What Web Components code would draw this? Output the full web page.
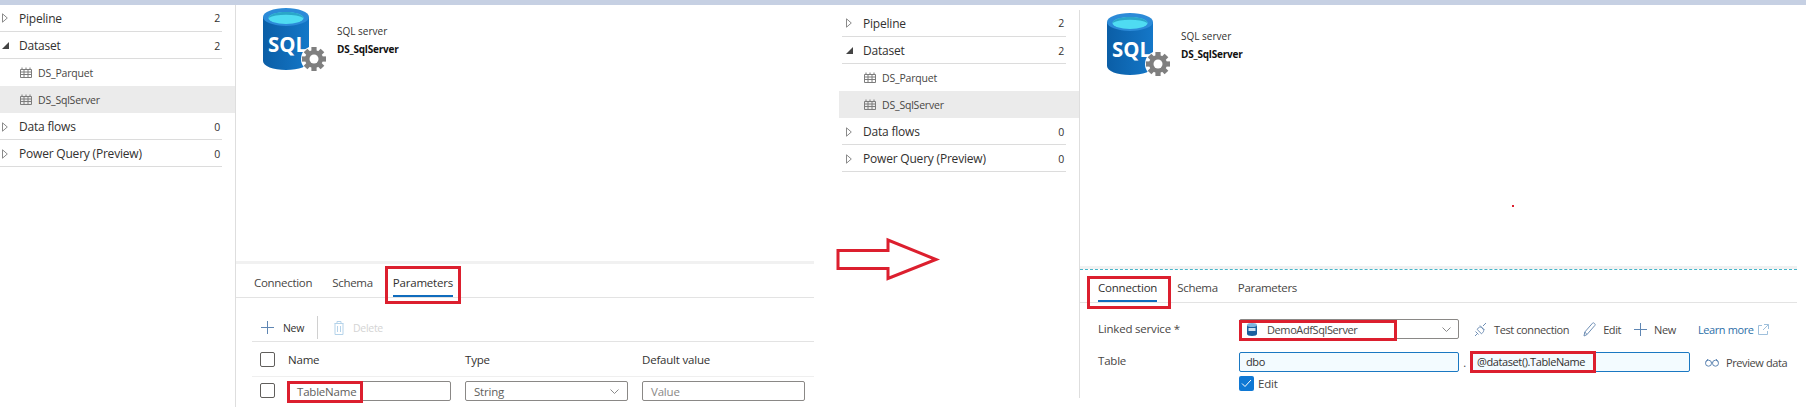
<!DOCTYPE html>
<html>
<head>
<meta charset="utf-8">
<title>Dataset parameters</title>
<style>
    html, body { margin: 0; height: 100%; overflow: hidden; background: #fff; }
    body { font-family: "Open Sans", "Noto Sans", sans-serif; color: #323130; }
</style>
</head>
<body>
<adf-screen>
    <adf-pane style="--pane-width: 820px; --pane-height: 402px; --main-width: 579px">
        <adf-tree></adf-tree>
        <adf-tabs active="Parameters">
            <adf-parameters></adf-parameters>
        </adf-tabs>
    </adf-pane>
    <adf-pane style="--pane-width: 958px; --pane-height: 388px; --main-width: 718px; margin-left: 24px; margin-top: 5px">
        <adf-tree></adf-tree>
        <adf-tabs active="Connection" dashed>
            <adf-connection></adf-connection>
        </adf-tabs>
    </adf-pane>

    <!-- annotations drawn over the screenshot -->
    <red-box slot="notes" x="385" y="266" w="76" h="38"></red-box>
    <red-box slot="notes" x="287" y="381" w="76" h="22"></red-box>
    <red-box slot="notes" x="1087" y="276" w="84" h="33"></red-box>
    <red-box slot="notes" x="1239" y="320" w="158" h="21"></red-box>
    <red-box slot="notes" x="1470" y="351" w="126" h="22"></red-box>
    <red-arrow slot="notes"></red-arrow>
</adf-screen>

<script>
const ICONS = {
    plus: `<svg width="13" height="13" viewBox="0 0 13 13"><path d="M6.5 0v13M0 6.5h13" stroke="#5f86b3" fill="none"/></svg>`,
    trash: `<svg width="10" height="14" viewBox="0 0 10 14" fill="none" stroke="#b5d3ea"><path d="M.5 2.5h9M3 2.5V.5h4v2M1 2.5v11h8v-11M3.5 5v6M6.5 5v6"/></svg>`,
    chevron: `<svg width="9" height="5" viewBox="0 0 9 5"><path d="M.5.5l4 4 4-4" stroke="#8a8a8a" fill="none"/></svg>`,
    plug: `<svg width="13" height="15" viewBox="0 0 13 15" fill="none" stroke="#6f8fb5"><path d="M1 14l3-3M12 1L9 4M3.2 7.5l4.3 4.3 1.5-1.6c1-1 .9-2.300 0-3.200L7.700 5.700c-.9-.9-2.200-1-3.200 0zM6 3.500L10.500 8M1.500 9.500l3 3"/></svg>`,
    pencil: `<svg width="13" height="15" viewBox="0 0 13 15" fill="none" stroke="#6f8fb5"><path d="M1 14l.8-4L9.500 1.200c.5-.5 1.200-.5 1.700 0l.6.600c.5.500.5 1.200 0 1.700L4 12.500zM1.800 10L4 12.500"/></svg>`,
    external: `<svg width="11" height="11" viewBox="0 0 11 11" fill="none" stroke="#9fc0dc"><path d="M4 1.500H.5v9h9V7M6 .500h4.500V5M10.500 .500L5 6"/></svg>`,
    glasses: `<svg width="14" height="9" viewBox="0 0 14 9" fill="none" stroke="#5f86b3"><circle cx="3.500" cy="5.200" r="3"/><circle cx="10.500" cy="5.200" r="3"/><path d="M6.500 4.500c.5-.5 .5-.5 1 0M1 3.500L3 1M13 3.500L11 1"/></svg>`,
    db: `<svg width="10" height="13" viewBox="0 0 10 13"><path d="M0 2v9c0 1 2 2 5 2s5-1 5-2V2z" fill="#1b5f9e"/><ellipse cx="5" cy="2" rx="5" ry="2" fill="#7fb6e0"/><rect x="1.500" y="5" width="7" height="3" fill="#cfe3f3"/></svg>`,
    grid: `<svg width="12" height="11" viewBox="0 0 12 11" fill="none" stroke="#7d7d7d"><path d="M.5 2.500h11v8H.5zM.5 5h11M.5 7.500h11M4 2.500v8M8 2.500v8M2 .500v2M6 .500v2M10 .500v2"/></svg>`
};

class AdfScreen extends HTMLElement {
    constructor() {
        super();
        this.attachShadow({ mode: "open" });
    }

    connectedCallback() {
        this.shadowRoot.innerHTML = `
            <style>
                :host { display: block; position: relative; height: 407px; overflow: hidden; }
                .topbar { height: 5px; background: #c6d0e3; }
                .panes { display: flex; align-items: flex-start; margin-left: -5px; }
            </style>
            <div class="topbar"></div>
            <div class="panes"><slot></slot></div>
            <slot name="notes"></slot>
        `;
    }
}

class AdfPane extends HTMLElement {
    constructor() {
        super();
        this.attachShadow({ mode: "open" });
    }

    connectedCallback() {
        this.shadowRoot.innerHTML = `
            <style>
                :host {
                    display: flex;
                    flex: none;
                    width: var(--pane-width);
                    height: var(--pane-height);
                }
                .side { flex: none; width: 240px; }
                .main {
                    flex: none;
                    width: var(--main-width);
                    box-sizing: border-box;
                    border-left: 1px solid #dedede;
                    display: flex;
                    flex-direction: column;
                }
                .head {
                    flex: none;
                    height: 256px;
                    box-sizing: border-box;
                    padding: 3px 0 0 27px;
                    display: flex;
                }
                .titles { margin: 14px 0 0 10px; font-size: 10px; line-height: 18px; }
                .titles b { display: block; font-weight: 700; color: #111; font-size: 10px; letter-spacing: -.2px; }
                text { font-family: "Open Sans", sans-serif; font-weight: 700; }
            </style>
            <div class="side"><slot name="tree"></slot></div>
            <div class="main">
                <div class="head">
                    <svg width="64" height="64" viewBox="0 0 64 64">
                        <defs>
                            <linearGradient id="can" x1="0" x2="1" y1="0" y2="0">
                                <stop offset="0" stop-color="#0b5ea6"/>
                                <stop offset="1" stop-color="#1477c8"/>
                            </linearGradient>
                        </defs>
                        <path d="M0 9v44c0 5 10 9 23 9s23-4 23-9V9z" fill="url(#can)"/>
                        <ellipse cx="23" cy="9" rx="23" ry="9" fill="#2c8bd8"/>
                        <ellipse cx="23" cy="10" rx="17.500" ry="6" fill="#4fdcf2"/>
                        <path d="M5.500 10c0-3.300 7.800-6 17.500-6s17.500 2.700 17.500 6c-4-2.400-10-3.300-17.500-3.300S9.500 7.600 5.500 10z" fill="#2aa7c9"/>
                        <text x="5" y="44" font-size="22" fill="#fff" textLength="39" lengthAdjust="spacingAndGlyphs">SQL</text>
                        <g transform="translate(51 51)">
                            <circle r="13" fill="#fff"/>
                            <g fill="#7f7f7f">
                                <circle r="9"/>
                                <rect x="-2.600" y="-12" width="5.200" height="24"/>
                                <rect x="-2.600" y="-12" width="5.200" height="24" transform="rotate(45)"/>
                                <rect x="-2.600" y="-12" width="5.200" height="24" transform="rotate(90)"/>
                                <rect x="-2.600" y="-12" width="5.200" height="24" transform="rotate(135)"/>
                            </g>
                            <circle r="4.500" fill="#fff"/>
                        </g>
                    </svg>
                    <div class="titles">SQL server<b>DS_SqlServer</b></div>
                </div>
                <slot></slot>
            </div>
        `;
        const tree = this.querySelector("adf-tree");
        if (tree) tree.slot = "tree";
    }
}

class AdfTree extends HTMLElement {
    constructor() {
        super();
        this.attachShadow({ mode: "open" });
    }

    row(label, count, open) {
        const arrow = open
            ? `<svg width="7" height="7" viewBox="0 0 7 7"><path d="M0 7L7 0v7z" fill="#444"/></svg>`
            : `<svg width="6" height="10" viewBox="0 0 6 10"><path d="M.5 .8v8.400L5.300 5z" fill="none" stroke="#8a8a8a"/></svg>`;
        return `<div class="row"><span class="arrow">${arrow}</span><span class="label">${label}</span><span class="count">${count}</span></div>`;
    }

    leaf(label, selected) {
        return `<div class="leaf ${selected ? "selected" : ""}">${ICONS.grid}<span>${label}</span></div>`;
    }

    connectedCallback() {
        this.shadowRoot.innerHTML = `
            <style>
                :host { display: block; }
                .row {
                    height: 27px;
                    box-sizing: border-box;
                    margin: 0 13px 0 3px;
                    border-bottom: 1px solid #dcdcdc;
                    display: flex;
                    align-items: center;
                    font-size: 12px;
                    letter-spacing: -.2px;
                    color: #323130;
                }
                .row:nth-child(n+3) { padding-top: 1px; }
                .arrow { width: 21px; padding-left: 4px; box-sizing: border-box; display: flex; }
                .label { flex: 1; }
                .count { font-size: 10.500px; margin-right: 2px; }
                .leaf {
                    height: 27px;
                    display: flex;
                    align-items: center;
                    padding-left: 25px;
                    font-size: 10.500px;
                    letter-spacing: -.2px;
                    color: #484644;
                }
                .leaf svg { margin-right: 6px; }
                .leaf.selected { background: #ebebeb; }
            </style>
            ${this.row("Pipeline", 2)}
            ${this.row("Dataset", 2, true)}
            ${this.leaf("DS_Parquet")}
            ${this.leaf("DS_SqlServer", true)}
            ${this.row("Data flows", 0)}
            ${this.row("Power Query (Preview)", 0)}
        `;
    }
}

class AdfTabs extends HTMLElement {
    constructor() {
        super();
        this.attachShadow({ mode: "open" });
    }

    connectedCallback() {
        const active = this.getAttribute("active");
        const tabs = ["Connection", "Schema", "Parameters"]
            .map((name) => `<span class="tab ${name === active ? "active" : ""}">${name}</span>`)
            .join("");
        this.shadowRoot.innerHTML = `
            <style>
                :host { display: block; flex: 1; min-height: 0; }
                .bar { height: 3px; background: #f1f1f1; }
                .strip {
                    height: 34px;
                    box-sizing: border-box;
                    padding-left: 18px;
                    border-bottom: 1px solid #e3e3e3;
                    display: flex;
                    gap: 20px;
                    font-size: 11.500px;
                    letter-spacing: -.3px;
                }
                :host([dashed]) .strip { border-top: 1px dashed #45b5c9; }
                .tab { height: 33px; box-sizing: border-box; padding-top: 11px; line-height: 16px; color: #484644; }
                :host([dashed]) .tab { height: 32px; padding-top: 10px; }
                .active { color: #323130; border-bottom: 2px solid #0f6cbd; font-weight: 500; letter-spacing: -.2px; }
            </style>
            <div class="bar"></div>
            <div class="strip">${tabs}</div>
            <slot></slot>
        `;
    }
}

class AdfParameters extends HTMLElement {
    constructor() {
        super();
        this.attachShadow({ mode: "open" });
    }

    connectedCallback() {
        this.shadowRoot.innerHTML = `
            <style>
                :host { display: block; padding-left: 16px; font-size: 11.500px; letter-spacing: -.2px; overflow: hidden; }
                .toolbar {
                    height: 44px;
                    box-sizing: border-box;
                    padding: 16px 0 0 9px;
                    border-bottom: 1px solid #e3e3e3;
                    display: flex;
                    align-items: center;
                    font-size: 10.500px;
                    letter-spacing: -.3px;
                }
                .toolbar .text { margin-left: 9px; }
                .divider { width: 1px; height: 23px; background: #d0d0d0; margin: 0 16px 0 13px; }
                .disabled { color: #d4d4d4; margin-left: 9px; }
                .row {
                    display: grid;
                    grid-template-columns: 28px 177px 177px 163px;
                    padding-left: 8px;
                    align-items: center;
                }
                .header { height: 35px; border-bottom: 1px solid #efefef; box-sizing: border-box; }
                .body { height: 30px; padding-top: 4px; box-sizing: border-box; align-items: start; }
                .box { width: 15px; height: 15px; box-sizing: border-box; border: 1px solid #605e5c; border-radius: 2px; }
                .body .box { margin-top: 2px; }
                .field {
                    width: 163px;
                    height: 20px;
                    box-sizing: border-box;
                    border: 1px solid #8a8886;
                    border-radius: 2px;
                    padding: 0 8px;
                    display: flex;
                    align-items: center;
                    justify-content: space-between;
                    color: #605e5c;
                }
                .field.placeholder { color: #8a8886; }
            </style>
            <div class="toolbar">
                ${ICONS.plus}<span class="text">New</span>
                <span class="divider"></span>
                ${ICONS.trash}<span class="disabled">Delete</span>
            </div>
            <div class="row header">
                <span class="box"></span><span>Name</span><span>Type</span><span>Default value</span>
            </div>
            <div class="row body">
                <span class="box"></span>
                <span class="field">TableName</span>
                <span class="field">String ${ICONS.chevron}</span>
                <span class="field placeholder">Value</span>
            </div>
        `;
    }
}

class AdfConnection extends HTMLElement {
    constructor() {
        super();
        this.attachShadow({ mode: "open" });
    }

    connectedCallback() {
        this.shadowRoot.innerHTML = `
            <style>
                :host {
                    display: grid;
                    grid-template-columns: 141px 1fr;
                    padding: 16px 0 0 18px;
                    font-size: 11.500px;
                    letter-spacing: -.2px;
                    color: #484644;
                }
                .label { line-height: 20px; }
                .label.second { line-height: 17px; }
                .line { display: flex; align-items: center; height: 20px; font-size: 11px; letter-spacing: -.4px; }
                .second { margin-top: 13px; }
                .select {
                    width: 220px;
                    height: 20px;
                    box-sizing: border-box;
                    border: 1px solid #8a8886;
                    border-radius: 2px;
                    padding: 0 7px;
                    display: flex;
                    align-items: center;
                }
                .select svg:first-child { margin-right: 10px; }
                .select svg:last-child { margin-left: auto; }
                .input {
                    width: 220px;
                    height: 20px;
                    box-sizing: border-box;
                    border: 1px solid #1a78c2;
                    border-radius: 2px;
                    background: #f3fbff;
                    padding: 0 6px;
                    line-height: 18px;
                    color: #323130;
                }
                .dot { width: 11px; text-align: center; }
                .action { display: inline-flex; align-items: center; gap: 7px; }
                .link { color: #2d6fa8; gap: 4px; }
                .edit { display: flex; align-items: center; gap: 4px; margin-top: 4px; height: 15px; }
                .check {
                    width: 15px;
                    height: 15px;
                    border-radius: 2px;
                    background: #0f78d4;
                    display: flex;
                    align-items: center;
                    justify-content: center;
                }
            </style>
            <div class="label">Linked service *</div>
            <div class="line">
                <div class="select">${ICONS.db}<span>DemoAdfSqlServer</span>${ICONS.chevron}</div>
                <span class="action" style="margin-left:15px">${ICONS.plug}Test connection</span>
                <span class="action" style="margin-left:14px">${ICONS.pencil}Edit</span>
                <span class="action" style="margin-left:13px">${ICONS.plus}New</span>
                <span class="action link" style="margin-left:22px">Learn more ${ICONS.external}</span>
            </div>
            <div class="label second">Table</div>
            <div class="second">
                <div class="line">
                    <div class="input">dbo</div>
                    <span class="dot">.</span>
                    <div class="input">@dataset().TableName</div>
                    <span class="action" style="margin-left:15px">${ICONS.glasses}Preview data</span>
                </div>
                <div class="edit">
                    <span class="check"><svg width="11" height="9" viewBox="0 0 11 9"><path d="M1 4.500l3 3 6-6.500" stroke="#fff" fill="none"/></svg></span>
                    Edit
                </div>
            </div>
        `;
    }
}

class RedBox extends HTMLElement {
    constructor() {
        super();
        this.attachShadow({ mode: "open" });
    }

    connectedCallback() {
        const [x, y, w, h] = ["x", "y", "w", "h"].map((name) => this.getAttribute(name));
        this.shadowRoot.innerHTML = `
            <style>
                :host {
                    position: absolute;
                    left: ${x}px; top: ${y}px; width: ${w}px; height: ${h}px;
                    box-sizing: border-box;
                    border: 3px solid #dc1f2e;
                }
            </style>
        `;
    }
}

class RedArrow extends HTMLElement {
    constructor() {
        super();
        this.attachShadow({ mode: "open" });
    }

    connectedCallback() {
        this.shadowRoot.innerHTML = `
            <style>
                :host { position: absolute; left: 0; top: 0; }
                svg { position: absolute; left: 830px; top: 200px; }
                i { position: absolute; left: 1512px; top: 205px; width: 2px; height: 2px; background: #dc1f2e; }
            </style>
            <svg width="115" height="85" viewBox="830 200 115 85">
                <path d="M838 250.500h50V240l48 19.500-48 19v-10h-50z" fill="#fff" stroke="#dc1f2e" stroke-width="3"/>
            </svg>
            <i></i>
        `;
    }
}

customElements.define("adf-screen", AdfScreen);
customElements.define("adf-pane", AdfPane);
customElements.define("adf-tree", AdfTree);
customElements.define("adf-tabs", AdfTabs);
customElements.define("adf-parameters", AdfParameters);
customElements.define("adf-connection", AdfConnection);
customElements.define("red-box", RedBox);
customElements.define("red-arrow", RedArrow);
</script>
</body>
</html>
